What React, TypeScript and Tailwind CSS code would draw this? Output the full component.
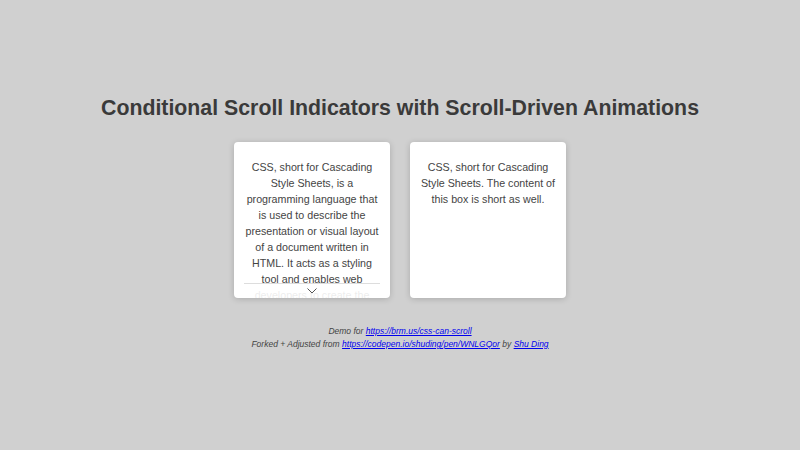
const longText =
  'CSS, short for Cascading Style Sheets, is a programming language that is used to describe the presentation or visual layout of a document written in HTML. It acts as a styling tool and enables web developers to create the look and feel of websites, including colors, fonts, spacing and positioning of elements.'

const shortText = 'CSS, short for Cascading Style Sheets. The content of this box is short as well.'

function ScrollBox({ text, overflow }: { text: string; overflow?: boolean }) {
  return (
    <div className="relative w-[156px] h-[156px] bg-white rounded-[4px] shadow-[0_1px_6px_rgba(0,0,0,0.18)] overflow-hidden">
      <div className="h-full overflow-y-auto [scrollbar-width:none] px-[10px] pt-[17px] pb-[15px]">
        <p className="text-center text-[10.7px] leading-[16px] text-[#444]">{text}</p>
      </div>
      {overflow && (
        <div className="absolute left-[10px] right-[10px] bottom-0 h-[15px] border-t border-[#ddd] bg-white/90 flex justify-center items-start">
          {/* down chevron */}
          <svg width="10" height="6" viewBox="0 0 10 6" className="mt-[4px]" fill="none">
            <path d="M0.5 0.5 L5 5 L9.5 0.5" stroke="#555" strokeWidth="1" />
          </svg>
        </div>
      )}
    </div>
  )
}

export default function App() {
  return (
    <div className="min-h-screen bg-[#d0d0d0] flex flex-col items-center pt-[95px] font-['Liberation_Sans',Arial,sans-serif] text-[#444]">
      <h1 className="text-[21.3px] font-bold text-[#3a3a3a] leading-[26px]">
        Conditional Scroll Indicators with Scroll-Driven Animations
      </h1>
      <div className="flex gap-5 mt-[21px]">
        <ScrollBox text={longText} overflow />
        <ScrollBox text={shortText} />
      </div>
      <div className="mt-[27px] text-center italic text-[8.5px] leading-[13px] text-[#444]">
        <p>
          Demo for{' '}
          <a href="#" className="text-[#0000ee] underline">
            https://brm.us/css-can-scroll
          </a>
        </p>
        <p>
          Forked + Adjusted from{' '}
          <a href="#" className="text-[#0000ee] underline">
            https://codepen.io/shuding/pen/WNLGQor
          </a>{' '}
          by{' '}
          <a href="#" className="text-[#0000ee] underline">
            Shu Ding
          </a>
        </p>
      </div>
    </div>
  )
}
